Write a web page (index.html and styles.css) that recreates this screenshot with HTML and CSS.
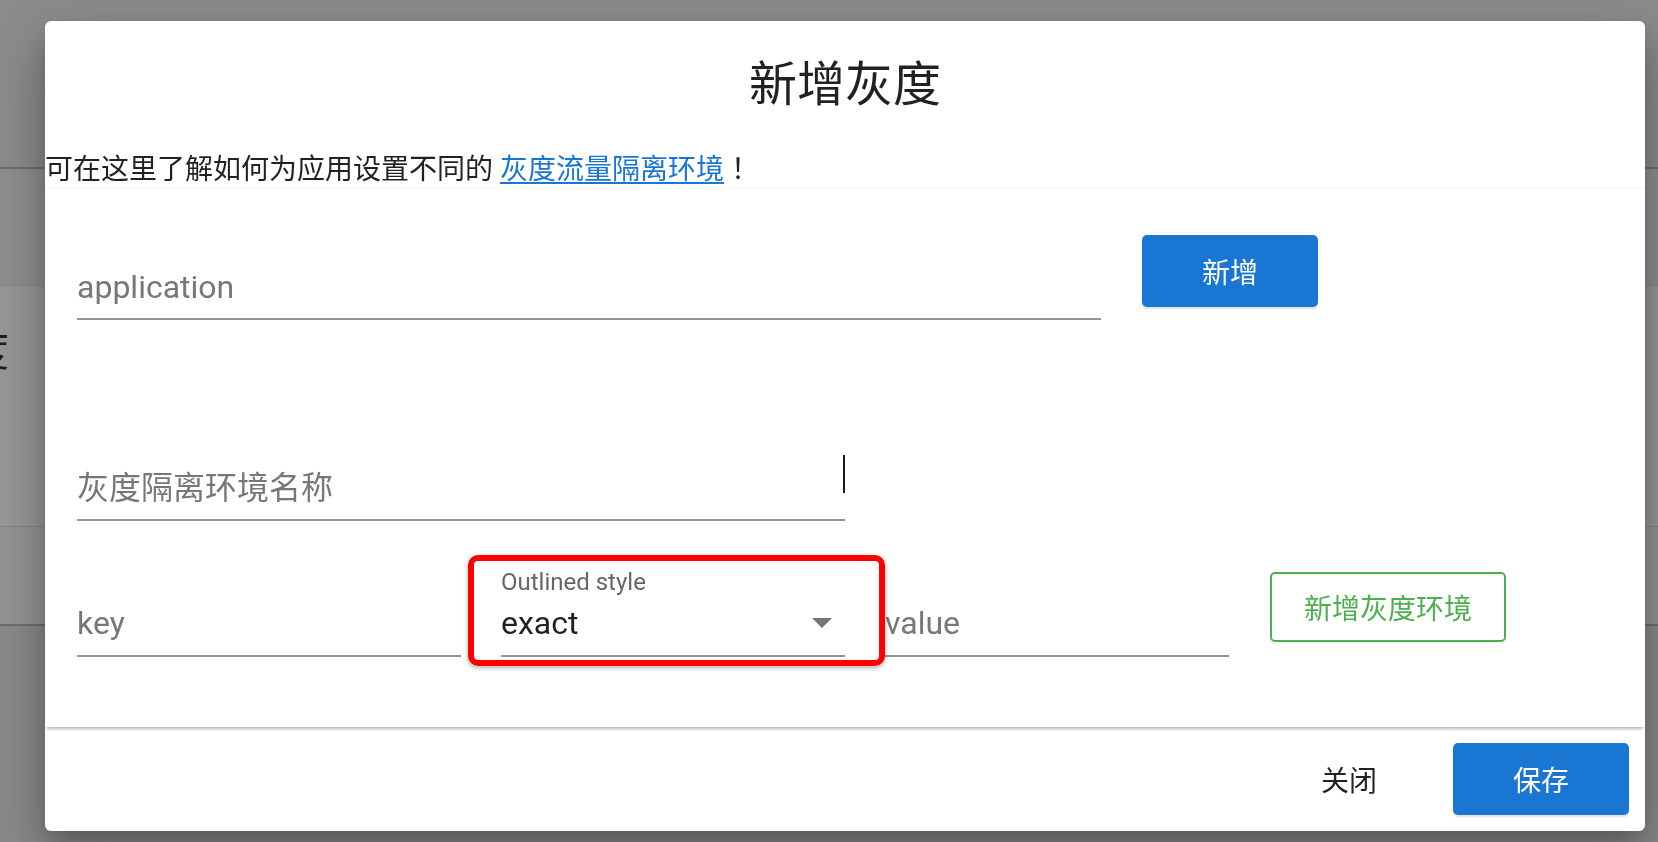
FILE: index.html
```html
<!DOCTYPE html>
<html lang="zh-CN">
<head>
<meta charset="utf-8">
<title>新增灰度</title>
<link rel="stylesheet" href="styles.css">
</head>
<body>
<div class="page">
  <div class="band band-top"></div>
  <div class="rule rule-dark"></div>
  <div class="band band-a"></div>
  <div class="band band-b"><span class="behind-char">度</span></div>
  <div class="rule rule-light"></div>
  <div class="band band-c"></div>
  <div class="rule rule-dark"></div>
  <div class="band band-d"></div>
</div>

<div class="modal">
  <div class="dialog">
    <h2 class="dialog-title">新增灰度</h2>
    <p class="intro">可在这里了解如何为应用设置不同的 <a class="intro-link" href="#">灰度流量隔离环境</a> <span class="bang">！</span></p>

    <div class="content">
      <div class="row row-app">
        <div class="field field-app"><span class="field-label">application</span></div>
        <button class="btn btn-contained">新增</button>
      </div>

      <div class="row row-name">
        <div class="field field-name">
          <span class="field-label">灰度隔离环境名称</span>
          <span class="caret"></span>
        </div>
      </div>

      <div class="row row-rule">
        <div class="field field-key"><span class="field-label">key</span></div>
        <div class="select">
          <span class="select-label">Outlined style</span>
          <div class="select-input">
            <span class="select-value">exact</span>
            <svg class="select-arrow" width="20" height="10" viewBox="0 0 20 10"><polygon points="0,0 20,0 10,10" fill="#757575"/></svg>
          </div>
          <span class="highlight"></span>
        </div>
        <div class="field field-value"><span class="field-label">value</span></div>
        <button class="btn btn-outlined">新增灰度环境</button>
      </div>
    </div>

    <div class="actions">
      <button class="btn btn-text">关闭</button>
      <button class="btn btn-contained">保存</button>
    </div>
  </div>
</div>
</body>
</html>
```

FILE: styles.css
```css
html, body {
  margin: 0;
  padding: 0;
}

body {
  width: 1658px;
  height: 842px;
  overflow: hidden;
  font-family: Roboto, "Noto Sans CJK SC", sans-serif;
  background: #8a8a8a;
}

/* dimmed page behind the modal */
.page {
  display: flex;
  flex-direction: column;
  height: 842px;
}

.band-top { height: 167px; background: #8b8b8b; }
.band-a { height: 118px; background: #8e8e8e; }
.band-b { height: 239px; background: #979797; overflow: hidden; }
.band-c { height: 97px; background: #949494; }
.band-d { flex: 1; background: #8a8a8a; }

.rule-dark { height: 2px; background: #6e6e6e; }
.rule-light { height: 1px; background: #858585; }

.behind-char {
  display: block;
  margin: 36px 0 0 -33px;
  font-family: "Noto Sans CJK SC", sans-serif;
  font-size: 42px;
  line-height: 50px;
  color: #1e1e1e;
}

/* modal */
.modal {
  position: fixed;
  inset: 0;
  padding: 21px 0 0 45px;
}

.dialog {
  width: 1600px;
  display: flex;
  flex-direction: column;
  background: #fff;
  border-radius: 6px;
  box-shadow: 0 22px 60px 8px rgba(0, 0, 0, 0.12),
              0 30px 50px 4px rgba(0, 0, 0, 0.14),
              0 10px 24px -6px rgba(0, 0, 0, 0.25);
}

.dialog-title {
  margin: 0;
  padding: 29px 48px 39px;
  text-align: center;
  font-family: "Noto Sans CJK SC", sans-serif;
  font-size: 48px;
  line-height: 60px;
  font-weight: 400;
  color: rgba(0, 0, 0, 0.87);
}

.intro {
  margin: 0;
  padding-top: 2px;
  height: 38px;
  font-family: Roboto, "Noto Sans CJK SC", sans-serif;
  font-size: 28px;
  line-height: 38px;
  color: rgba(0, 0, 0, 0.87);
}

.intro-link {
  color: #1976d2;
  text-decoration: underline;
  text-underline-offset: 3px;
  text-decoration-thickness: 2px;
}

.bang {
  font-family: "Noto Sans CJK SC", sans-serif;
  line-height: 0;
}

.content {
  padding: 46px 32px 70px;
  box-shadow: 0 4px 3px -2px rgba(0, 0, 0, 0.28),
              0 -2px 4px rgba(0, 0, 0, 0.035);
  position: relative;
}

.row {
  display: flex;
}

.row-app {
  align-items: flex-start;
  gap: 41px;
}

.row-name {
  margin-top: 149px;
}

.row-rule {
  margin-top: 46px;
  align-items: flex-end;
}

.field {
  border-bottom: 2px solid #949494;
  padding-bottom: 12px;
  position: relative;
}

.field-label {
  display: block;
  font-size: 32px;
  line-height: 38px;
  color: #777;
  white-space: nowrap;
}

.field-app { width: 1024px; margin-top: 33px; }
.field-name { width: 768px; }
.field-key { width: 384px; margin-right: 40px; }
.field-value { width: 344px; margin-right: 41px; }

.row-rule .field {
  padding-bottom: 14px;
}

.row-rule .field-label {
  line-height: 36px;
}

.caret {
  position: absolute;
  right: 0;
  top: -14px;
  width: 2px;
  height: 38px;
  background: #1a1a1a;
}

.select {
  width: 344px;
  margin-right: 40px;
  display: flex;
  flex-direction: column;
  position: relative;
}

.select-label {
  font-size: 24px;
  line-height: 30px;
  color: #666;
  margin-bottom: 8px;
}

.select-input {
  display: flex;
  align-items: center;
  justify-content: space-between;
  border-bottom: 2px solid #949494;
  padding-bottom: 14px;
}

.select-value {
  font-size: 32px;
  line-height: 36px;
  color: rgba(0, 0, 0, 0.87);
}

.select-arrow {
  margin-right: 13px;
}

.highlight {
  position: absolute;
  left: -33px;
  top: -12px;
  right: -40px;
  bottom: -9px;
  border: 6px solid #ff0000;
  border-radius: 10px;
  box-shadow: 0 2px 5px rgba(0, 0, 0, 0.3);
  z-index: 2;
}

.btn {
  font-family: Roboto, "Noto Sans CJK SC", sans-serif;
  font-size: 28px;
  font-weight: 400;
  border-radius: 5px;
  padding: 0;
  cursor: pointer;
  flex: none;
}

.btn-contained {
  width: 176px;
  height: 72px;
  border: none;
  background: #1976d2;
  color: #fff;
  box-shadow: 0 2px 2px rgba(0, 0, 0, 0.12);
}

.btn-outlined {
  width: 236px;
  height: 70px;
  margin-bottom: 15px;
  background: transparent;
  border: 2px solid #4caf50;
  color: #4caf50;
}

.btn-text {
  width: 176px;
  height: 72px;
  border: none;
  background: transparent;
  color: rgba(0, 0, 0, 0.87);
}

.actions {
  display: flex;
  justify-content: flex-end;
  gap: 16px;
  padding: 16px;
}
```
